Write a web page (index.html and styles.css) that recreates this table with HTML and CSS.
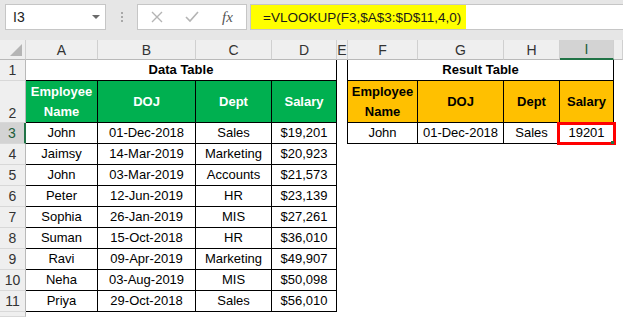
FILE: index.html
```
<!DOCTYPE html>
<html lang="en">
<head>
    <meta charset="UTF-8">
    <title>VLOOKUP Result Table</title>
    <link rel="stylesheet" href="styles.css">
</head>
<body>
    <div class="toolbar">
        <div class="name-box">
            <span>I3</span>
            <span class="drop"></span>
        </div>
        <div class="dots">
            <i></i><i></i><i></i>
        </div>
        <div class="buttons">
            <svg class="btn-icon" width="14" height="14" viewBox="0 0 14 14">
                <path d="M2 2 L12 12 M12 2 L2 12" stroke="#b4b4b4" stroke-width="1.4" fill="none"/>
            </svg>
            <svg class="btn-icon" width="16" height="14" viewBox="0 0 16 14">
                <path d="M2 7 L6 11 L14 2" stroke="#b4b4b4" stroke-width="1.6" fill="none"/>
            </svg>
            <span class="fx">fx</span>
        </div>
        <div class="formula">
            <span class="formula-text">=VLOOKUP(F3,$A$3:$D$11,4,0)</span>
        </div>
    </div>

    <div class="sheet">
        <!-- column headers -->
        <div class="hd corner"><span class="tri"></span></div>
        <div class="hd">A</div>
        <div class="hd">B</div>
        <div class="hd">C</div>
        <div class="hd">D</div>
        <div class="hd">E</div>
        <div class="hd">F</div>
        <div class="hd">G</div>
        <div class="hd">H</div>
        <div class="hd sel-col">I</div>
        <div class="hd"></div>

        <!-- row 1 -->
        <div class="rh">1</div>
        <div class="c dt title span4">Data Table</div>
        <div class="c edge"></div>
        <div class="c dt title span4">Result Table</div>
        <div class="c"></div>

        <!-- row 2 -->
        <div class="rh low">2</div>
        <div class="c dt green">Employee<br>Name</div>
        <div class="c dt green">DOJ</div>
        <div class="c dt green">Dept</div>
        <div class="c dt green">Salary</div>
        <div class="c edge"></div>
        <div class="c dt orange">Employee<br>Name</div>
        <div class="c dt orange">DOJ</div>
        <div class="c dt orange">Dept</div>
        <div class="c dt orange">Salary</div>
        <div class="c"></div>

        <!-- row 3 -->
        <div class="rh sel-row">3</div>
        <div class="c dt">John</div>
        <div class="c dt">01-Dec-2018</div>
        <div class="c dt">Sales</div>
        <div class="c dt">$19,201</div>
        <div class="c edge"></div>
        <div class="c dt">John</div>
        <div class="c dt">01-Dec-2018</div>
        <div class="c dt">Sales</div>
        <div class="c dt active">19201<span class="mark"></span><span class="handle"></span></div>
        <div class="c"></div>

        <div class="rh">4</div>
        <div class="c dt">Jaimsy</div>
        <div class="c dt">14-Mar-2019</div>
        <div class="c dt">Marketing</div>
        <div class="c dt">$20,923</div>
        <div class="c rest"></div>

        <div class="rh">5</div>
        <div class="c dt">John</div>
        <div class="c dt">03-Mar-2019</div>
        <div class="c dt">Accounts</div>
        <div class="c dt">$21,573</div>
        <div class="c rest"></div>

        <div class="rh">6</div>
        <div class="c dt">Peter</div>
        <div class="c dt">12-Jun-2019</div>
        <div class="c dt">HR</div>
        <div class="c dt">$23,139</div>
        <div class="c rest"></div>

        <div class="rh">7</div>
        <div class="c dt">Sophia</div>
        <div class="c dt">26-Jan-2019</div>
        <div class="c dt">MIS</div>
        <div class="c dt">$27,261</div>
        <div class="c rest"></div>

        <div class="rh">8</div>
        <div class="c dt">Suman</div>
        <div class="c dt">15-Oct-2018</div>
        <div class="c dt">HR</div>
        <div class="c dt">$36,010</div>
        <div class="c rest"></div>

        <div class="rh">9</div>
        <div class="c dt">Ravi</div>
        <div class="c dt">09-Apr-2019</div>
        <div class="c dt">Marketing</div>
        <div class="c dt">$49,907</div>
        <div class="c rest"></div>

        <div class="rh">10</div>
        <div class="c dt">Neha</div>
        <div class="c dt">03-Aug-2019</div>
        <div class="c dt">MIS</div>
        <div class="c dt">$50,098</div>
        <div class="c rest"></div>

        <div class="rh">11</div>
        <div class="c dt">Priya</div>
        <div class="c dt">29-Oct-2018</div>
        <div class="c dt">Sales</div>
        <div class="c dt">$56,010</div>
        <div class="c rest"></div>

        <div class="rh"></div>
        <div class="c all"></div>
    </div>
</body>
</html>
```

FILE: styles.css
```
* {
    box-sizing: border-box;
}
body {
    margin: 0;
    width: 623px;
    height: 317px;
    overflow: hidden;
    background: #fff;
    font-family: "Liberation Sans", Arial, sans-serif;
    font-size: 13px;
    color: #000;
}

/* formula bar */
.toolbar {
    height: 40px;
    background: #e6e6e6;
    display: flex;
    align-items: flex-start;
    padding-top: 4px;
}
.name-box {
    margin-left: 5px;
    width: 101px;
    height: 26px;
    background: #fff;
    border: 1px solid #c6c6c6;
    display: flex;
    align-items: center;
    justify-content: space-between;
    padding: 0 5px 0 7px;
    font-size: 14px;
    color: #222;
}
.drop {
    width: 0;
    height: 0;
    border-left: 4px solid transparent;
    border-right: 4px solid transparent;
    border-top: 4px solid #6a6a6a;
}
.dots {
    width: 31px;
    height: 26px;
    display: flex;
    flex-direction: column;
    align-items: center;
    justify-content: center;
    gap: 2px;
}
.dots i {
    width: 2px;
    height: 2px;
    background: #a8a8a8;
}
.buttons {
    width: 110px;
    height: 26px;
    background: #fff;
    border: 1px solid #c6c6c6;
    display: flex;
    align-items: center;
    padding-left: 12px;
}
.btn-icon {
    margin-right: 20px;
}
.buttons svg + svg {
    margin-right: 22px;
}
.fx {
    font-family: "Liberation Serif", serif;
    font-style: italic;
    font-size: 15px;
    color: #555;
}
.formula {
    flex: 1;
    margin-left: 3px;
    height: 26px;
    background: #fff;
    border: 1px solid #c6c6c6;
    border-right: none;
    display: flex;
}
.formula-text {
    background: #ffff00;
    height: 24px;
    display: flex;
    align-items: center;
    padding: 0 5px 0 12px;
    font-size: 13.5px;
    color: #1a1a1a;
}

/* grid */
.sheet {
    display: grid;
    grid-template-columns: 26px 72px 98px 76px 65px 11px 70px 86px 56px 54px 9px;
    grid-template-rows: 20px 21px 42px repeat(9, 21px) 5px;
}
.hd {
    background: #efefef;
    border-right: 1px solid #d0d0d0;
    border-bottom: 1px solid #b9b9b9;
    display: flex;
    align-items: center;
    justify-content: center;
    font-size: 14px;
    color: #333;
}
.corner {
    position: relative;
}
.tri {
    position: absolute;
    right: 3px;
    bottom: 3px;
    width: 0;
    height: 0;
    border-left: 12px solid transparent;
    border-bottom: 12px solid #b5b5b5;
}
.sel-col {
    background: #d3d3d3;
    border-bottom: 2px solid #217346;
    color: #1c5d3a;
}
.rh {
    background: #efefef;
    border-right: 1px solid #b9b9b9;
    border-bottom: 1px solid #d8d8d8;
    display: flex;
    align-items: center;
    justify-content: center;
    font-size: 14px;
    color: #333;
}
.rh.low {
    align-items: flex-end;
    padding-bottom: 1px;
}
.sel-row {
    background: #d3d3d3;
    border-right: 2px solid #217346;
    color: #1c5d3a;
}

.c {
    display: flex;
    align-items: center;
    justify-content: center;
    text-align: center;
    line-height: 20px;
}
.dt {
    border-right: 1px solid #000;
    border-bottom: 1px solid #000;
}
.edge {
    border-right: 1px solid #000;
}
.span4 {
    grid-column: span 4;
}
.rest {
    grid-column: span 6;
}
.all {
    grid-column: span 10;
}
.title {
    font-weight: bold;
}
.green {
    background: #00b050;
    color: #fff;
    font-weight: bold;
}
.orange {
    background: #ffc000;
    color: #000;
    font-weight: bold;
}
.active {
    position: relative;
}
.mark {
    position: absolute;
    left: -3px;
    top: -1px;
    right: -3px;
    bottom: -2px;
    border: 3px solid #ff0000;
}
.handle {
    position: absolute;
    right: -1px;
    bottom: -1px;
    width: 3px;
    height: 3px;
    background: #217346;
}
```
